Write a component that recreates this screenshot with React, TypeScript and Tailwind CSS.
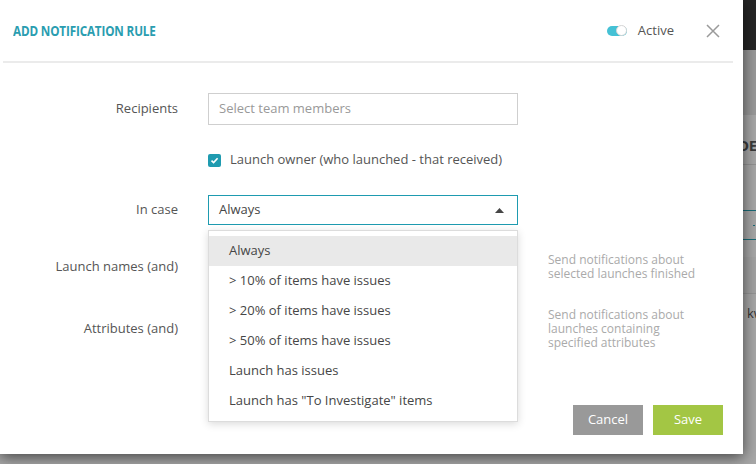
import React from 'react'

const options = [
  'Always',
  '> 10% of items have issues',
  '> 20% of items have issues',
  '> 50% of items have issues',
  'Launch has issues',
  'Launch has "To Investigate" items',
]

function Toggle() {
  return (
    <div className="relative w-[20px] h-[10px] rounded-full bg-[#45c1d5]">
      <div className="absolute right-0 top-[-0.5px] w-[11px] h-[11px] rounded-full bg-white border border-[#d5d5d5]" />
    </div>
  )
}

function CloseIcon() {
  return (
    <svg width="14" height="14" viewBox="0 0 14 14" className="text-[#9a9a9a]">
      <path d="M1 1 L13 13 M13 1 L1 13" stroke="currentColor" strokeWidth="1.5" fill="none" />
    </svg>
  )
}

function Checkbox() {
  return (
    <div className="w-[13px] h-[13px] rounded-[2px] bg-[#1f9bb0] flex items-center justify-center">
      <svg width="9" height="9" viewBox="0 0 9 9">
        <path d="M1.5 4.6 L3.6 6.6 L7.6 2.2" stroke="white" strokeWidth="1.6" fill="none" />
      </svg>
    </div>
  )
}

function BackgroundPage() {
  return (
    <div className="absolute inset-0 flex flex-col bg-[#a7a7a7]">
      <div className="h-[50px] bg-[#262626] shrink-0" />
      <div className="h-[65px] bg-[#999999] shrink-0" />
      <div className="flex flex-col pl-[738px]">
        <div className="h-[50px] flex items-center pt-[11px] border-b border-[#939393] text-[15px] font-bold text-[#3c3c3c] tracking-tight whitespace-nowrap">
          DEN
        </div>
        <div className="h-[45px]" />
        <div className="h-[30px] border-y border-[#1b6c78] flex items-center justify-end pr-[1px]">
          <div className="w-[2px] h-[1px] bg-[#1b6c78]" />
        </div>
        <div className="h-[17px]" />
        <div className="h-[37px] bg-[#a3a3a3] border-b border-[#959595]" />
        <div className="h-[40px] flex items-center text-[13px] text-[#333] whitespace-nowrap pl-[9px]">kw</div>
      </div>
    </div>
  )
}

export default function App() {
  return (
    <div
      className="relative w-[756px] h-[464px] overflow-hidden"
      style={{ fontFamily: '"Open Sans", "Noto Sans", sans-serif' }}
    >
      <BackgroundPage />

      <div className="absolute left-0 top-0 w-[743px] h-[454px] bg-white shadow-[0_3px_14px_rgba(0,0,0,0.6)] flex flex-col">
        <div className="h-[61px] flex items-center pl-[13px] pr-[23px] shrink-0">
          <h2 className="text-[15px] font-bold uppercase text-[#2a9db0] tracking-[-0.2px] origin-left scale-x-[0.78] whitespace-nowrap">
            Add notification rule
          </h2>
          <div className="ml-auto flex items-center">
            <Toggle />
            <span className="ml-[11px] text-[13px] text-[#555]">Active</span>
            <div className="ml-[32px]">
              <CloseIcon />
            </div>
          </div>
        </div>
        <div className="ml-[3px] mr-[10px] h-[2px] bg-[#ebebeb] shrink-0" />

        <div className="relative flex flex-col text-[13px] text-[#555]">
          <div className="mt-[30px] h-[32px] flex items-center">
            <label className="w-[178px] text-right">Recipients</label>
            <div className="ml-[30px] w-[310px] h-[32px] border border-[#cfcfcf] flex items-center px-[10px] text-[#999]">
              Select team members
            </div>
          </div>

          <div className="mt-[25px] h-[20px] flex items-center">
            <div className="ml-[208px] flex items-center gap-[9px]">
              <Checkbox />
              <span>Launch owner (who launched - that received)</span>
            </div>
          </div>

          <div className="mt-[25px] h-[30px] flex items-center">
            <label className="w-[178px] text-right">In case</label>
            <div className="ml-[30px] w-[310px] h-[30px] border border-[#1e9bb0] flex items-center pl-[10px] pr-[13px] text-[#464646]">
              <span>Always</span>
              <svg width="9" height="5" viewBox="0 0 9 5" className="ml-auto">
                <path d="M0 5 L4.5 0 L9 5 Z" fill="#464646" />
              </svg>
            </div>
          </div>

          <div className="mt-[27px] h-[30px] flex items-center">
            <label className="w-[178px] text-right">Launch names (and)</label>
            <div className="ml-[30px] w-[310px]" />
            <div className="ml-[30px] flex flex-col text-[12px] leading-[14px] text-[#aaa]">
              <span>Send notifications about</span>
              <span>selected launches finished</span>
            </div>
          </div>

          <div className="mt-[26px] h-[42px] flex items-center">
            <label className="w-[178px] text-right">Attributes (and)</label>
            <div className="ml-[30px] w-[310px]" />
            <div className="ml-[30px] flex flex-col text-[12px] leading-[14px] text-[#aaa]">
              <span>Send notifications about</span>
              <span>launches containing</span>
              <span>specified attributes</span>
            </div>
          </div>

          <div className="mt-[55px] flex justify-end gap-[10px] pr-[20px]">
            <button className="w-[70px] h-[30px] bg-[#999999] text-white text-[13px]">Cancel</button>
            <button className="w-[70px] h-[30px] bg-[#a3c644] text-white text-[13px]">Save</button>
          </div>

          <ul className="absolute left-[208px] top-[167px] w-[310px] py-[5px] bg-white border border-[#dcdcdc] shadow-[0_2px_8px_rgba(0,0,0,0.15)] text-[#464646]">
            {options.map((o, i) => (
              <li
                key={o}
                className={`h-[30px] flex items-center pl-[20px] ${i === 0 ? 'bg-[#e9e9e9]' : ''}`}
              >
                {o}
              </li>
            ))}
          </ul>
        </div>
      </div>
    </div>
  )
}
